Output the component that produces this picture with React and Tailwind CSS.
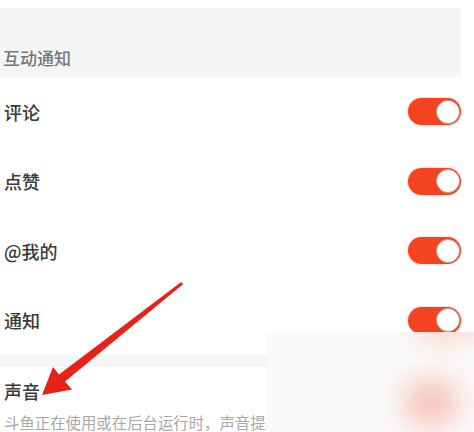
import React from "react";

const rows = ["评论", "点赞", "@我的", "通知"];

// iOS style switch, always on in this screen
const Toggle = () => (
  <div className="relative w-[53px] h-[27px] rounded-full bg-[#f4441f] shadow-[0_0_2px_rgba(244,68,31,0.5)]">
    <div className="absolute right-[1.5px] top-[1.5px] w-[24px] h-[24px] rounded-full bg-white border border-[#bf9a90]" />
  </div>
);

const Arrow = () => (
  <svg
    className="absolute left-0 top-0 pointer-events-none"
    width="474"
    height="432"
    viewBox="0 0 474 432"
  >
    <polygon
      fill="#e6221a"
      points="181.2,282 59,374.5 53,367 42,395 72,389.5 65,381.5 183,284.2"
    />
  </svg>
);

export default function App() {
  return (
    <div
      className="relative w-[474px] h-[432px] overflow-hidden bg-white"
      style={{ fontFamily: '"Noto Sans CJK SC", "Noto Sans", sans-serif' }}
    >
      <div className="w-[461px] pt-[8px]">
        <div className="h-[69px] bg-[#f4f5f7] pt-[40px] pl-[3px]">
          <div className="text-[17px] leading-[20px] font-medium text-[#767676]">互动通知</div>
        </div>

        {rows.map((label) => (
          <div key={label} className="h-[69.5px] flex items-center justify-between pl-[4px]">
            <span className="text-[18px] leading-[24px] font-medium text-[#3a3a3a]">{label}</span>
            <Toggle />
          </div>
        ))}

        <div className="h-[12px] bg-[#f4f5f7]" />

        <div className="pl-[4px] pt-[12px]">
          <div className="text-[18px] leading-[24px] font-medium text-[#3a3a3a]">声音</div>
          <div className="mt-[8px] text-[15.4px] leading-[22px] text-[#a8a8a8] whitespace-nowrap">
            斗鱼正在使用或在后台运行时，声音提示音
          </div>
        </div>
      </div>

      {/* blurred cover over the lower right corner */}
      <div className="absolute left-[266px] top-[332px] w-[208px] h-[100px] bg-[#fafafa] overflow-hidden">
        <div className="absolute left-[150px] top-[-18px] w-[60px] h-[26px] rounded-full bg-[#f8d3c9] blur-md" />
        <div className="absolute left-[140px] top-[50px] w-[50px] h-[40px] rounded-full bg-[#f5b3a3] blur-lg" />
      </div>

      <Arrow />
    </div>
  );
}
